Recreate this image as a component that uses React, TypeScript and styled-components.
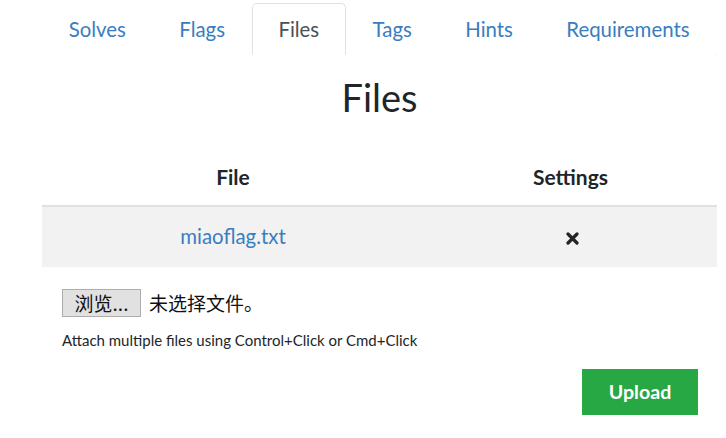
import React from "react";
import styled, { createGlobalStyle } from "styled-components";

const Global = createGlobalStyle`
  html, body { margin: 0; padding: 0; background: #fff; }
  body { font-family: Lato, "Noto Sans", sans-serif; color: #212529; }
`;

const Page = styled.div`
  width: 675px;
  margin-left: 42px;
`;

const Tabs = styled.ul`
  display: flex;
  list-style: none;
  margin: 0;
  padding: 3px 0 0 0;
  border-bottom: 1px solid #dee2e6;
`;

const Tab = styled.li<{ $active?: boolean }>`
  margin-bottom: -1px;
  padding: 10px 25.7px;
  font-size: 20.4px;
  line-height: 30px;
  border: 1px solid ${(p) => (p.$active ? "#dee2e6" : "transparent")};
  border-bottom-color: ${(p) => (p.$active ? "#fff" : "transparent")};
  border-radius: 5px 5px 0 0;
  background: #fff;
  color: ${(p) => (p.$active ? "#495057" : "#3a7dbf")};
`;

const Title = styled.h1`
  margin: 20px 0 0 0;
  text-align: center;
  font-size: 38px;
  font-weight: 400;
  line-height: 1.2;
  color: #212529;
`;

const Table = styled.table`
  width: 100%;
  margin-top: 30px;
  border-collapse: collapse;
  table-layout: fixed;
`;

const HeadCell = styled.th<{ $w: number }>`
  width: ${(p) => p.$w}px;
  padding: 12px 0 14px;
  font-size: 21px;
  line-height: 28px;
  font-weight: 700;
  text-align: center;
  border-bottom: 2px solid #dee2e6;
`;

const Row = styled.tr`
  background: #f2f2f2;
`;

const Cell = styled.td`
  padding: 15px 0 16px;
  height: 29px;
  font-size: 20.4px;
  line-height: 29px;
  text-align: center;
  vertical-align: middle;
`;

const FileLink = styled.a`
  color: #3a7dbf;
  text-decoration: none;
`;

const Form = styled.div`
  display: flex;
  flex-direction: column;
  padding: 22px 19px 0 20px;
`;

const PickerLine = styled.div`
  display: flex;
  align-items: center;
  gap: 8px;
  font-family: "Noto Sans CJK SC", sans-serif;
  font-size: 19px;
  color: #111;
`;

const BrowseButton = styled.button`
  box-sizing: border-box;
  width: 79px;
  height: 28px;
  padding: 0;
  border: 1px solid #adadad;
  background: #e1e1e1;
  font-family: "Noto Sans CJK SC", sans-serif;
  font-size: 19px;
  line-height: 26px;
  color: #111;
`;

const Hint = styled.small`
  margin-top: 13px;
  font-size: 15px;
  line-height: 20px;
  color: #212529;
`;

const UploadButton = styled.button`
  align-self: flex-end;
  margin-top: 19px;
  width: 116px;
  height: 46px;
  border: none;
  border-radius: 0;
  background: #28a745;
  color: #fff;
  font-family: Lato, sans-serif;
  font-weight: 700;
  font-size: 19.6px;
`;

const IconBox = styled.span`
  display: inline-block;
  margin-left: 3px;
  vertical-align: middle;
  line-height: 0;
`;

const XIcon = () => (
  <IconBox>
    <svg width="13" height="13" viewBox="0 0 13 13">
      <path d="M2 2 L11 11 M11 2 L2 11" stroke="#212529" strokeWidth="3.2" strokeLinecap="round" />
    </svg>
  </IconBox>
);

export default function App() {
  const tabs = ["Solves", "Flags", "Files", "Tags", "Hints", "Requirements"];
  return (
    <>
      <Global />
      <Page>
        <Tabs>
          {tabs.map((t) => (
            <Tab key={t} $active={t === "Files"}>
              {t}
            </Tab>
          ))}
        </Tabs>
        <Title>Files</Title>
        <Table>
          <thead>
            <tr>
              <HeadCell $w={382}>File</HeadCell>
              <HeadCell $w={293}>Settings</HeadCell>
            </tr>
          </thead>
          <tbody>
            <Row>
              <Cell>
                <FileLink href="#">miaoflag.txt</FileLink>
              </Cell>
              <Cell>
                <XIcon />
              </Cell>
            </Row>
          </tbody>
        </Table>
        <Form>
          <PickerLine>
            <BrowseButton>浏览...</BrowseButton>
            <span>未选择文件。</span>
          </PickerLine>
          <Hint>Attach multiple files using Control+Click or Cmd+Click</Hint>
          <UploadButton>Upload</UploadButton>
        </Form>
      </Page>
    </>
  );
}
